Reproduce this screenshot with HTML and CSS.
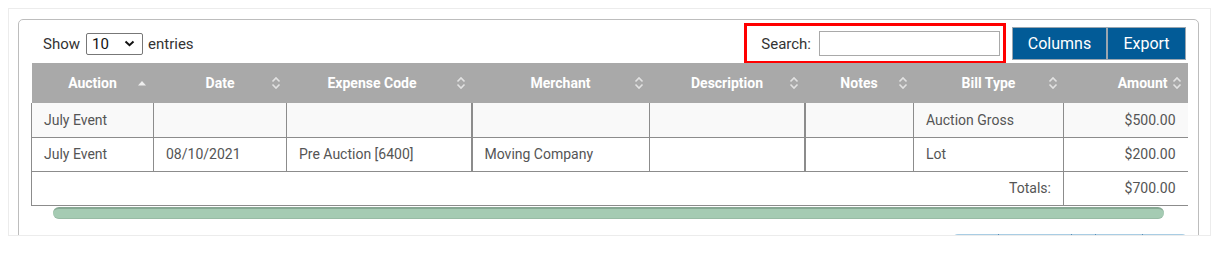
FILE: index.html
```html
<!DOCTYPE html>
<html>
<head>
<meta charset="utf-8">
<link rel="stylesheet" href="styles.css">
</head>
<body>
<div class="frame">
  <div class="card">
    <div class="toolbar">
      <div class="length">
        <span>Show</span>
        <span class="select">10
          <svg class="chev" width="11" height="7" viewBox="0 0 11 7"><path d="M1.5 1.5 L5.5 5.2 L9.5 1.5" fill="none" stroke="#111" stroke-width="2"/></svg>
        </span>
        <span>entries</span>
      </div>
      <div class="search">
        <span class="highlight"></span>
        <label>Search:</label>
        <span class="input"></span>
      </div>
      <div class="buttons">
        <span class="btn btn-columns">Columns</span>
        <span class="btn btn-export">Export</span>
      </div>
    </div>
    <table class="grid">
      <colgroup>
        <col class="c1"><col class="c2"><col class="c3"><col class="c4"><col class="c5"><col class="c6"><col class="c7"><col class="c8">
      </colgroup>
      <thead>
        <tr>
          <th><span class="lbl">Auction</span><span class="sort asc"><svg width="10" height="6" viewBox="0 0 10 6"><path d="M1 5.5 L5 1 L9 5.5 Z" fill="#eee"/></svg></span></th>
          <th><span class="lbl">Date</span><span class="sort"><svg width="10" height="13" viewBox="0 0 10 13"><path d="M1.5 5 L5 1.5 L8.5 5 M1.5 8 L5 11.5 L8.5 8" fill="none" stroke="#e2e2e2" stroke-width="1.6"/></svg></span></th>
          <th class="exp-h"><span class="lbl">Expense Code</span><span class="sort"><svg width="10" height="13" viewBox="0 0 10 13"><path d="M1.5 5 L5 1.5 L8.5 5 M1.5 8 L5 11.5 L8.5 8" fill="none" stroke="#e2e2e2" stroke-width="1.6"/></svg></span></th>
          <th><span class="lbl">Merchant</span><span class="sort"><svg width="10" height="13" viewBox="0 0 10 13"><path d="M1.5 5 L5 1.5 L8.5 5 M1.5 8 L5 11.5 L8.5 8" fill="none" stroke="#e2e2e2" stroke-width="1.6"/></svg></span></th>
          <th><span class="lbl">Description</span><span class="sort"><svg width="10" height="13" viewBox="0 0 10 13"><path d="M1.5 5 L5 1.5 L8.5 5 M1.5 8 L5 11.5 L8.5 8" fill="none" stroke="#e2e2e2" stroke-width="1.6"/></svg></span></th>
          <th><span class="lbl">Notes</span><span class="sort"><svg width="10" height="13" viewBox="0 0 10 13"><path d="M1.5 5 L5 1.5 L8.5 5 M1.5 8 L5 11.5 L8.5 8" fill="none" stroke="#e2e2e2" stroke-width="1.6"/></svg></span></th>
          <th><span class="lbl">Bill Type</span><span class="sort"><svg width="10" height="13" viewBox="0 0 10 13"><path d="M1.5 5 L5 1.5 L8.5 5 M1.5 8 L5 11.5 L8.5 8" fill="none" stroke="#e2e2e2" stroke-width="1.6"/></svg></span></th>
          <th class="amt-h"><span class="lbl">Amount</span><span class="sort"><svg width="10" height="13" viewBox="0 0 10 13"><path d="M1.5 5 L5 1.5 L8.5 5 M1.5 8 L5 11.5 L8.5 8" fill="none" stroke="#e2e2e2" stroke-width="1.6"/></svg></span></th>
        </tr>
      </thead>
      <tbody>
        <tr class="odd">
          <td>July Event</td><td></td><td class="thick"></td><td></td><td class="thick"></td><td></td><td>Auction Gross</td><td class="amt">$500.00</td>
        </tr>
        <tr>
          <td>July Event</td><td>08/10/2021</td><td class="thick">Pre Auction [6400]</td><td>Moving Company</td><td class="thick"></td><td></td><td>Lot</td><td class="amt">$200.00</td>
        </tr>
      </tbody>
      <tfoot>
        <tr>
          <td colspan="7" class="totals">Totals:</td><td class="amt">$700.00</td>
        </tr>
      </tfoot>
    </table>
    <div class="scroll"><div class="thumb"></div></div>
    <div class="pager">
      <span class="pg p1"></span><span class="pg p2"></span><span class="pg p3"></span><span class="pg p4"></span><span class="pg p5"></span>
    </div>
  </div>
</div>
</body>
</html>
```

FILE: styles.css
```css
* { box-sizing: border-box; }
body {
  margin: 8px;
  background: #fff;
  font-family: Roboto, "Liberation Sans", Arial, sans-serif;
}
.frame {
  height: 228px;
  border: 1px solid #ececec;
  overflow: hidden;
}
.card {
  margin: 10px 11px 0 9px;
  border: 1px solid #bdbdbd;
  border-radius: 5px 5px 0 0;
  padding: 0 12px 0 12px;
  height: 260px;
}
.toolbar {
  position: relative;
  display: flex;
  align-items: center;
  height: 43px;
  padding-top: 4px;
}
.length {
  display: flex;
  align-items: center;
  padding-left: 12px;
  font-size: 15px;
  color: #333;
}
.select {
  display: inline-flex;
  align-items: center;
  justify-content: space-between;
  width: 57px;
  height: 22px;
  margin: 0 5px 0 6px;
  padding: 0 7px 0 5px;
  border: 1px solid #777;
  border-radius: 2px;
  font-size: 15px;
  color: #111;
  background: #fff;
}
.search {
  position: relative;
  display: flex;
  align-items: center;
  margin-left: auto;
  font-size: 15px;
  color: #333;
}
.search label { margin-right: 8px; }
.input {
  display: block;
  width: 181px;
  height: 25px;
  border: 1px solid #a9a9a9;
  background: #fff;
}
.highlight {
  position: absolute;
  left: -17px;
  right: -6px;
  top: -8px;
  bottom: -8px;
  border: 3px solid #f00;
}
.buttons {
  display: flex;
  margin-left: 12px;
}
.btn {
  display: flex;
  align-items: center;
  justify-content: center;
  height: 33px;
  background: #025b97;
  color: #fff;
  font-size: 16px;
  border: 1px solid #9aa6b0;
}
.btn-columns { width: 95px; }
.btn-export { width: 79px; }

.grid {
  width: 1156px;
  table-layout: fixed;
  border-collapse: collapse;
  font-size: 14px;
  color: #555;
}
.c1 { width: 122px; }
.c2 { width: 133px; }
.c3 { width: 185px; }
.c4 { width: 178px; }
.c5 { width: 155px; }
.c6 { width: 109px; }
.c7 { width: 150px; }
.c8 { width: 124px; }
.grid th {
  position: relative;
  height: 40px;
  background: #a9a9a9;
  color: #fff;
  font-weight: 700;
  font-size: 14px;
  text-align: center;
  padding: 0;
  border: none;
}
.grid th.exp-h { padding-right: 14px; }
.grid th.amt-h { text-align: right; padding-right: 20px; }
.sort {
  position: absolute;
  right: 6px;
  top: 50%;
  transform: translateY(-50%);
  display: flex;
  align-items: center;
}
.sort.asc { right: 7px; }
.grid td {
  height: 34px;
  padding: 0 12px 0 12px;
  border: 1px solid #8c8c8c;
  border-top: none;
  white-space: nowrap;
}
.grid tbody tr:first-child td { border-top: none; }
.grid td:last-child { border-right: none; }
.grid td.thick { border-right: 2px solid #8c8c8c; }
.grid tr.odd td { background: #f9f9f9; }
.grid td.amt { text-align: right; }
.grid td.totals { text-align: right; }
.scroll {
  padding: 1px 22px 0 22px;
}
.thumb {
  height: 12px;
  border-radius: 6px;
  background: #a5cbb3;
  border-top: 2px solid #86a893;
  border-bottom: 1px solid #98bba5;
}
.pager {
  display: flex;
  justify-content: flex-end;
  margin-top: 15px;
  margin-right: -2px;
}
.pg {
  height: 10px;
  background: #a9cde4;
  border-left: 1px solid #5a8fb8;
}
.p1 { width: 46px; border-left: none; border-radius: 6px 0 0 0; }
.p2 { width: 73px; }
.p3 { width: 24px; }
.p4 { width: 47px; }
.p5 { width: 46px; border-radius: 0 6px 0 0; }
```
